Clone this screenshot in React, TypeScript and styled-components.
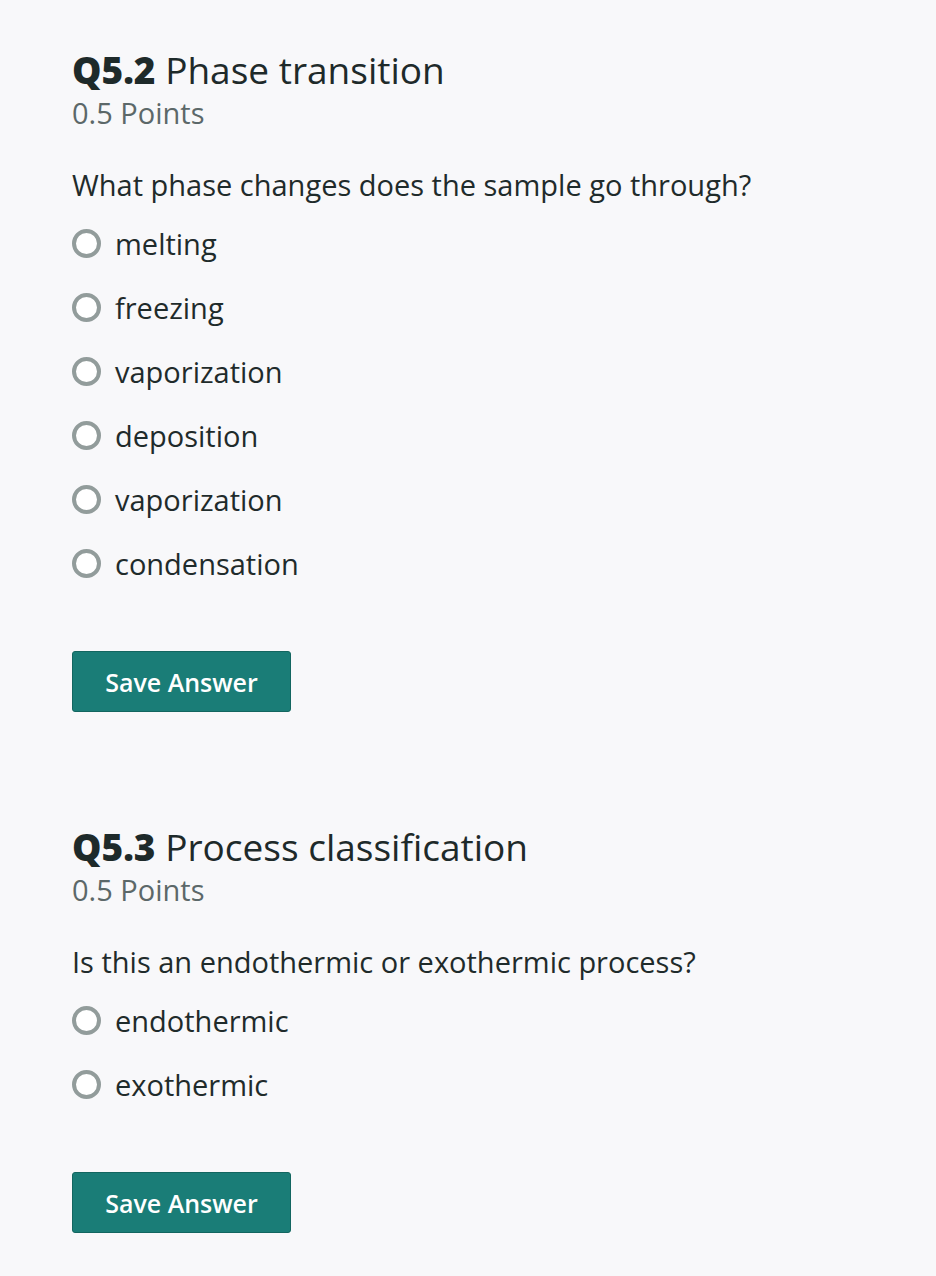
import React from 'react'
import styled, { createGlobalStyle } from 'styled-components'

const GlobalStyle = createGlobalStyle`
  html, body {
    margin: 0;
    padding: 0;
    background: #f8f8fa;
  }
  body {
    font-family: 'Open Sans', 'Liberation Sans', sans-serif;
    color: #1f2b2b;
  }
`

const Page = styled.div`
  padding: 48px 72px 40px;
  display: flex;
  flex-direction: column;
  gap: 113px;
`

const Question = styled.section`
  display: flex;
  flex-direction: column;
  align-items: flex-start;
`

const Title = styled.h2`
  margin: 0;
  font-size: 37px;
  line-height: 44px;
  font-weight: 400;
  color: #1e2a2a;
`

const Num = styled.b`
  font-weight: 800;
`

const Points = styled.div`
  margin-top: 5px;
  font-size: 29px;
  line-height: 32px;
  color: #5c6869;
`

const Prompt = styled.p`
  margin: 39px 0 9px;
  font-size: 29px;
  line-height: 34px;
`

const Options = styled.div`
  display: flex;
  flex-direction: column;
`

const Option = styled.label`
  height: 64px;
  display: flex;
  align-items: center;
  gap: 14px;
  font-size: 29px;
  cursor: pointer;
`

const Radio = styled.span`
  box-sizing: border-box;
  width: 29px;
  height: 29px;
  border-radius: 50%;
  border: 4px solid #929c9b;
  background: #fff;
  flex-shrink: 0;
`

const SaveButton = styled.button`
  margin-top: 56px;
  width: 219px;
  height: 61px;
  border: 1px solid #136660;
  border-radius: 3px;
  background: #1a7d77;
  color: #fff;
  font-family: inherit;
  font-size: 25px;
  font-weight: 600;
  cursor: pointer;
`

const questions = [
  {
    id: 'Q5.2',
    title: 'Phase transition',
    prompt: 'What phase changes does the sample go through?',
    options: ['melting', 'freezing', 'vaporization', 'deposition', 'vaporization', 'condensation']
  },
  {
    id: 'Q5.3',
    title: 'Process classification',
    prompt: 'Is this an endothermic or exothermic process?',
    options: ['endothermic', 'exothermic']
  }
]

export default function App() {
  return (
    <>
      <GlobalStyle />
      <Page>
        {questions.map(q => (
          <Question key={q.id}>
            <Title>
              <Num>{q.id}</Num> {q.title}
            </Title>
            <Points>0.5 Points</Points>
            <Prompt>{q.prompt}</Prompt>
            <Options>
              {q.options.map((opt, i) => (
                <Option key={i}>
                  <Radio />
                  {opt}
                </Option>
              ))}
            </Options>
            <SaveButton>Save Answer</SaveButton>
          </Question>
        ))}
      </Page>
    </>
  )
}
